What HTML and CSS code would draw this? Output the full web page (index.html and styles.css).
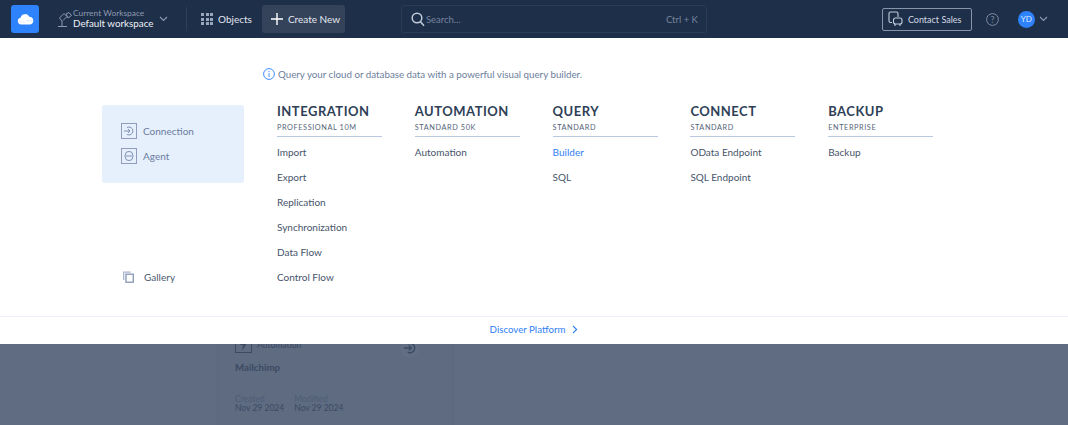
FILE: index.html
```html
<!DOCTYPE html>
<html lang="en">
<head>
<meta charset="utf-8">
<title>Create New</title>
<link rel="stylesheet" href="styles.css">
</head>
<body>
<header class="topbar">
  <a class="logo"><svg width="17" height="12" viewBox="0 0 20 14"><path d="M5 13.500a4 4 0 0 1-.9-7.900A5.600 5.600 0 0 1 14.600 4.400 4.600 4.600 0 0 1 15.500 13.500z" fill="#fff"/><path d="M2 10.500h7M11 9h8" stroke="#cfe0ff" stroke-width=".8"/></svg></a>
  <div class="workspace">
    <svg class="ws-icon" width="16" height="17" viewBox="0 0 16 17" fill="none" stroke="#8d9ab0" stroke-width="1"><path d="M1 15.500h9M5 15.500V10L2.500 7 7 2.500l3 3-4 4"/><path d="M9 3l3-1.500 2.500 3L11 7z"/></svg>
    <div class="ws-text"><span class="ws-label">Current Workspace</span><span class="ws-name">Default workspace</span></div>
    <svg class="chev" width="9" height="6" viewBox="0 0 9 6" fill="none" stroke="#8d9ab0" stroke-width="1.100"><path d="M1 1l3.500 3.500L8 1"/></svg>
  </div>
  <span class="divider"></span>
  <a class="nav-item objects"><span class="dots"><i></i><i></i><i></i><i></i><i></i><i></i><i></i><i></i><i></i></span>Objects</a>
  <a class="nav-item create"><svg width="12" height="12" viewBox="0 0 12 12" stroke="#fff" stroke-width="1.400"><path d="M6 0v12M0 6h12"/></svg>Create New</a>
  <div class="search">
    <svg width="14" height="15" viewBox="0 0 14 15" fill="none" stroke="#c3ccda" stroke-width="1.500"><circle cx="6" cy="6" r="4.800"/><path d="M9.500 9.800l3.500 4"/></svg>
    <span class="search-text">Search...</span>
    <span class="shortcut">Ctrl + K</span>
  </div>
  <a class="contact"><svg width="15" height="16" viewBox="0 0 15 16" fill="none" stroke="#c3ccda" stroke-width="1.100"><path d="M4 11.500H2.500A1.500 1.500 0 0 1 1 10V2.500A1.500 1.500 0 0 1 2.500 1h6A1.500 1.500 0 0 1 10 2.500V6"/><rect x="5.500" y="7" width="8.500" height="6" rx="2"/><path d="M7 13v2M12 13v2"/></svg>Contact Sales</a>
  <svg class="help" width="13" height="13" viewBox="0 0 13 13" fill="none" stroke="#7f8ca3"><circle cx="6.500" cy="6.500" r="5.900"/><text x="6.500" y="9.500" text-anchor="middle" class="help-q">?</text></svg>
  <span class="avatar">YD</span>
  <svg class="chev user-chev" width="9" height="6" viewBox="0 0 9 6" fill="none" stroke="#8d9ab0" stroke-width="1.100"><path d="M1 1l3.500 3.500L8 1"/></svg>
</header>

<section class="menu">
  <div class="menu-body">
    <aside class="side">
      <div class="side-panel">
        <a class="side-link"><span class="box"><svg width="10" height="10" viewBox="0 0 10 10" fill="none" stroke="#7f90b4"><path d="M0 5h6M4 3l2 2-2 2M3 1.500a4 4 0 1 1 0 7"/></svg></span>Connection</a>
        <a class="side-link"><span class="box"><svg width="10" height="10" viewBox="0 0 10 10" fill="none" stroke="#7f90b4"><path d="M1.500 4V3a3.500 2.500 0 0 1 7 0v1M1.500 6v1a3.500 2.500 0 0 0 7 0V6M0 5h10"/></svg></span>Agent</a>
      </div>
      <a class="gallery"><svg width="11" height="12" viewBox="0 0 11 12" fill="none"><path d="M.7 9V1.200h7" stroke="#aab4cc" stroke-width="1.300"/><rect x="3" y="3.200" width="7.300" height="8" stroke="#8f9dbb" stroke-width="1.400"/></svg>Gallery</a>
    </aside>
    <div class="main">
      <p class="hint"><svg width="12" height="12" viewBox="0 0 12 12" fill="none" stroke="#3f8cff"><circle cx="6" cy="6" r="5.400"/><path d="M6 5.200v3.600M6 3v1.200"/></svg>Query your cloud or database data with a powerful visual query builder.</p>
      <div class="columns">
        <div class="col">
          <h2>INTEGRATION</h2><small>PROFESSIONAL 10M</small>
          <ul><li>Import</li><li>Export</li><li>Replication</li><li>Synchronization</li><li>Data Flow</li><li>Control Flow</li></ul>
        </div>
        <div class="col">
          <h2>AUTOMATION</h2><small>STANDARD 50K</small>
          <ul><li>Automation</li></ul>
        </div>
        <div class="col">
          <h2>QUERY</h2><small>STANDARD</small>
          <ul><li class="active">Builder</li><li>SQL</li></ul>
        </div>
        <div class="col">
          <h2>CONNECT</h2><small>STANDARD</small>
          <ul><li>OData Endpoint</li><li>SQL Endpoint</li></ul>
        </div>
        <div class="col">
          <h2>BACKUP</h2><small>ENTERPRISE</small>
          <ul><li>Backup</li></ul>
        </div>
      </div>
    </div>
  </div>
  <a class="discover">Discover Platform<svg width="6" height="9" viewBox="0 0 6 9" fill="none" stroke="#2f80f5" stroke-width="1.200"><path d="M1 .8l3.600 3.700L1 8.200"/></svg></a>
</section>

<section class="backdrop">
  <div class="card">
    <div class="card-top">
      <span class="card-type"><span class="card-icon"><svg width="9" height="13" viewBox="0 0 9 13" fill="#3c4a63"><path d="M6 0L1 7h3l-1 6 5-8H5z"/></svg></span>Automation</span>
      <span class="card-run"><svg width="12" height="12" viewBox="0 0 10 10" fill="none" stroke="#3c4a63" stroke-width="1.200"><path d="M0 5h6M4 3l2 2-2 2M3 1.500a4 4 0 1 1 0 7"/></svg></span>
    </div>
    <h3>Mailchimp</h3>
    <div class="dates">
      <div><span>Created</span><b>Nov 29 2024</b></div>
      <div><span>Modified</span><b>Nov 29 2024</b></div>
    </div>
  </div>
</section>
</body>
</html>
```
FILE: styles.css
```css
* { box-sizing: border-box; }
html, body { margin: 0; height: 100%; overflow: hidden; }
body { font-family: Lato, "Liberation Sans", sans-serif; background: #5f6c82; }
a { text-decoration: none; color: inherit; }

.topbar { height: 38px; background: #1e2f4a; display: flex; align-items: center; padding: 0 0 0 11px; color: #e3e8f0; font-size: 10px; }
.logo { width: 28px; height: 28px; border-radius: 3px; background: #2e82fb; display: flex; align-items: center; justify-content: center; }
.workspace { display: flex; align-items: center; margin-left: 18px; width: 131px; }
.ws-icon { flex: none; }
.ws-text { display: flex; flex-direction: column; line-height: 10px; padding-bottom: 3px; }
.ws-label { font-size: 8.400px; color: #8d9ab0; white-space: nowrap; }
.ws-name { font-size: 9.800px; color: #eef1f6; white-space: nowrap; }
.chev { flex: none; }
.workspace .chev { margin-left: 6px; }
.divider { width: 1px; height: 24px; background: #2f405b; margin-left: -2px; }
.nav-item { display: flex; align-items: center; white-space: nowrap; }
.objects { margin-left: 14px; gap: 5px; font-size: 10px; }
.dots { display: grid; grid-template-columns: repeat(3, 3px); gap: 1.500px; }
.dots i { width: 3px; height: 3px; background: #9aa6b9; }
.create { margin-left: 10px; width: 83px; height: 28px; padding-left: 9px; background: #344359; border-radius: 3px; gap: 5px; font-size: 10px; }
.search { margin-left: 56px; width: 306px; height: 28px; border: 1px solid #2b3c58; border-radius: 3px; display: flex; align-items: center; padding: 0 8px 0 9px; gap: 1px; color: #76849b; font-size: 9.500px; }
.shortcut { margin-left: auto; font-size: 9.500px; }
.contact { margin-left: 175px; height: 23px; width: 90px; border: 1px solid #8995a8; border-radius: 2px; display: flex; align-items: center; padding-left: 5px; gap: 5px; font-size: 9px; color: #d3d9e3; white-space: nowrap; }
.help { margin-left: 14px; }
.help-q { font: 9px Lato, sans-serif; fill: #7f8ca3; stroke: none; }
.avatar { margin-left: 19px; width: 17px; height: 17px; border-radius: 50%; background: #2e82fb; color: #dfeaff; font-size: 8px; display: flex; align-items: center; justify-content: center; }
.user-chev { margin-left: 4px; }

.menu { position: relative; z-index: 1; height: 306px; background: #fff; display: flex; flex-direction: column; }
.menu-body { flex: 1; display: flex; padding-left: 102px; }
.side { width: 142px; padding-top: 67px; display: flex; flex-direction: column; }
.side-panel { height: 78px; background: #e6f0fd; border-radius: 3px; padding: 18px 0 0 19px; display: flex; flex-direction: column; gap: 9px; }
.side-link { display: flex; align-items: center; gap: 6px; height: 16px; font-size: 10px; color: #6a7c9d; }
.box { width: 16px; height: 16px; border: 1px solid #8f9dbb; display: flex; align-items: center; justify-content: center; }
.gallery { margin: 87px 0 0 21px; display: flex; align-items: center; gap: 10px; font-size: 10px; color: #4c5a70; height: 14px; }
.main { margin-left: 19px; padding-left: 14px; flex: 1; }
.hint { margin: 30px 0 0 -14px; display: flex; align-items: center; gap: 3px; font-size: 9.750px; color: #6c7e9c; height: 12px; }
.columns { display: flex; margin-top: 23px; gap: 32.800px; }
.col { width: 105px; }
.col h2 { margin: 0 0 3px; font-size: 13px; font-weight: 700; letter-spacing: .5px; line-height: 16px; color: #2f3f57; white-space: nowrap; }
.col small { display: block; padding-bottom: 2px; border-bottom: 1px solid #b9c9e4; font-size: 7.300px; line-height: 12px; letter-spacing: .6px; color: #56647a; white-space: nowrap; }
.col ul { list-style: none; margin: 8px 0 0; padding: 0; }
.col li { height: 25px; line-height: 15px; font-size: 10px; color: #46546a; white-space: nowrap; }
.col li.active { color: #2f80f5; }
.discover { height: 28px; padding-bottom: 3px; border-top: 1px solid #edf2fb; display: flex; align-items: center; justify-content: center; gap: 7px; font-size: 9.700px; color: #2f80f5; }

.backdrop { height: 81px; }
.card { margin: -14px 0 0 217px; width: 237px; height: 95px; background: #5e6b81; padding: 0 17px; border: 1px solid #5b687e; border-bottom: 0; color: #3c4a63; font-size: 8.500px; }
.card-top { display: flex; justify-content: space-between; align-items: flex-start; height: 29px; padding-top: 5px; }
.card-type { display: flex; align-items: center; gap: 5px; }
.card-icon { width: 17px; height: 17px; border: 1px solid #3c4a63; display: flex; align-items: center; justify-content: center; }
.card-run { display: flex; align-items: center; justify-content: center; width: 20px; height: 20px; border-radius: 50%; background: #616e84; margin: 2px 16px 0 0; }
.card h3 { margin: 0; font-size: 9.700px; line-height: 14px; font-weight: 700; color: #3c4a63; }
.dates { display: flex; gap: 10px; margin-top: 21px; line-height: 9px; }
.dates span { display: block; color: #4f5d76; }
.dates b { font-weight: 400; }
```
